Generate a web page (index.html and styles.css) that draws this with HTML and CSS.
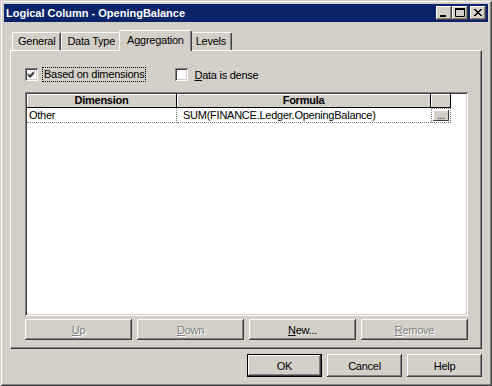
FILE: index.html
```html
<html lang="en">
<head>
    <meta charset="UTF-8">
    <title>Logical Column - OpeningBalance</title>
    <link rel="stylesheet" href="styles.css">
</head>
<body>
    <div class="window">
        <div class="titlebar">
            <span class="title">Logical Column - OpeningBalance</span>
            <div class="caption-btns">
                <span class="cap-btn">
                    <svg width="16" height="14" viewBox="0 0 16 14"><rect x="4" y="9" width="6" height="2" fill="#000"/></svg>
                </span>
                <span class="cap-btn">
                    <svg width="16" height="14" viewBox="0 0 16 14"><path d="M3.5 3.5h9v7h-9z" fill="none" stroke="#000"/><rect x="3" y="2" width="10" height="2" fill="#000"/></svg>
                </span>
                <span class="cap-btn close">
                    <svg width="16" height="14" viewBox="0 0 16 14"><path d="M4 3l7 7M5 3l7 7M11 3l-7 7M12 3l-7 7" stroke="#000" stroke-width="1"/></svg>
                </span>
            </div>
        </div>

        <div class="content">
            <div class="tabs">
                <span class="tab">General</span>
                <span class="tab">Data Type</span>
                <span class="tab active">Aggregation</span>
                <span class="tab">Levels</span>
            </div>

            <div class="panel">
                <div class="checks">
                    <label class="check">
                        <span class="box">
                            <svg width="9" height="9" viewBox="0 0 9 9"><path d="M1 3.5l2 2 4-4M1 4.5l2 2 4-4M1 5.5l2 2 4-4" stroke="#000" fill="none"/></svg>
                        </span>
                        <span class="focus">Based on dimensions</span>
                    </label>
                    <label class="check second">
                        <span class="box"></span>
                        <span class="cap"><u>D</u>ata is dense</span>
                    </label>
                </div>

                <div class="grid">
                    <div class="grid-head">
                        <span class="hcell col-dim">Dimension</span>
                        <span class="hcell col-formula">Formula</span>
                        <span class="hcell col-btn"></span>
                    </div>
                    <div class="grid-row">
                        <span class="cell col-dim">Other</span>
                        <span class="cell col-formula">SUM(FINANCE.Ledger.OpeningBalance)</span>
                        <span class="cell col-btn"><span class="dots">...</span></span>
                    </div>
                </div>

                <div class="grid-btns">
                    <button class="btn disabled"><u>U</u>p</button>
                    <button class="btn disabled"><u>D</u>own</button>
                    <button class="btn"><u>N</u>ew...</button>
                    <button class="btn disabled"><u>R</u>emove</button>
                </div>
            </div>

            <div class="dialog-btns">
                <button class="btn default">OK</button>
                <button class="btn">Cancel</button>
                <button class="btn">Help</button>
            </div>
        </div>
    </div>
</body>
</html>
```

FILE: styles.css
```css
* {
    box-sizing: border-box;
}

body {
    margin: 0;
    font-family: "Liberation Sans", Arial, sans-serif;
    font-size: 11px;
    letter-spacing: -0.25px;
    color: #000;
    background-color: #d4d0c8;
}

.window {
    width: 492px;
    height: 386px;
    padding: 4px;
    background-color: #d4d0c8;
    box-shadow: inset 1px 1px #d4d0c8, inset -1px -1px #404040, inset 2px 2px #fff, inset -2px -2px #808080;
    display: flex;
    flex-direction: column;
}

/* title bar */
.titlebar {
    height: 18px;
    background-color: #0a246a;
    display: flex;
    align-items: center;
    justify-content: space-between;
    padding: 0 2px;
}

.title {
    color: #fff;
    font-weight: bold;
    font-size: 11px;
    letter-spacing: 0;
}

.caption-btns {
    display: flex;
    align-items: center;
}

.cap-btn {
    width: 16px;
    height: 14px;
    background-color: #d4d0c8;
    box-shadow: inset -1px -1px #404040, inset 1px 1px #fff, inset -2px -2px #808080;
    display: block;
}

.cap-btn svg {
    display: block;
}

.cap-btn.close {
    margin-left: 2px;
}

/* tabs */
.content {
    padding: 8px 6px 0 6px;
}

.tabs {
    display: flex;
    height: 20px;
    padding-left: 2px;
    align-items: flex-end;
}

.tab {
    height: 18px;
    padding: 0 5px;
    line-height: 16px;
    border-top: 1px solid #fff;
    border-left: 1px solid #fff;
    border-right: 1px solid #404040;
    border-radius: 2px 2px 0 0;
    box-shadow: inset -1px 0 #808080;
}

.tab.active {
    height: 21px;
    margin: 0 -2px -1px -2px;
    padding: 0 7px;
    line-height: 18px;
    background-color: #d4d0c8;
    position: relative;
    z-index: 2;
}

/* panel */
.panel {
    height: 299px;
    padding: 17px 13px 7px 14px;
    border-top: 1px solid #fff;
    border-left: 1px solid #fff;
    border-right: 1px solid #404040;
    border-bottom: 1px solid #404040;
    box-shadow: inset -1px -1px #808080;
}

.checks {
    display: flex;
    height: 13px;
    align-items: center;
}

.check {
    display: flex;
    align-items: center;
}

.check.second {
    margin-left: 29px;
}

.box {
    width: 13px;
    height: 13px;
    background-color: #fff;
    box-shadow: inset 1px 1px #808080, inset -1px -1px #fff, inset 2px 2px #404040, inset -2px -2px #d4d0c8;
    display: flex;
    align-items: center;
    justify-content: center;
}

.box svg {
    display: block;
}

.focus {
    margin-left: 4px;
    padding: 0 1px;
    border: 1px dotted #000;
    line-height: 13px;
}

.cap {
    margin-left: 6px;
}

/* grid */
.grid {
    margin-top: 11px;
    height: 224px;
    padding: 2px;
    background-color: #fff;
    box-shadow: inset 1px 1px #808080, inset -1px -1px #fff, inset 2px 2px #404040, inset -2px -2px #d4d0c8;
}

.grid-head {
    display: flex;
    height: 14px;
}

.hcell {
    height: 14px;
    background-color: #d4d0c8;
    font-weight: bold;
    text-align: center;
    line-height: 13px;
    border-right: 1px solid #000;
    border-bottom: 1px solid #000;
    box-shadow: inset 1px 1px #fff;
}

.col-dim {
    width: 150px;
}

.col-formula {
    width: 254px;
}

.col-btn {
    width: 20px;
}

.grid-row {
    display: flex;
    height: 15px;
}

.cell {
    height: 15px;
    line-height: 14px;
    border-bottom: 1px dotted #808080;
    white-space: nowrap;
}

.cell.col-dim {
    padding-left: 2px;
    border-right: 1px dotted #808080;
}

.cell.col-formula {
    padding-left: 6px;
}

.cell.col-btn {
    border: 1px dotted #808080;
    padding: 1px;
}

.dots {
    display: block;
    height: 100%;
    background-color: #d4d0c8;
    box-shadow: inset -1px -1px #404040, inset 1px 1px #fff;
    text-align: center;
    line-height: 11px;
    font-size: 10px;
}

/* buttons */
.btn {
    font-family: "Liberation Sans", Arial, sans-serif;
    font-size: 11px;
    letter-spacing: -0.25px;
    color: #000;
    background-color: #d4d0c8;
    border: none;
    padding: 0;
    box-shadow: inset -1px -1px #404040, inset 1px 1px #fff, inset -2px -2px #808080;
}

.btn.disabled {
    color: #808080;
    text-shadow: 1px 1px #fff;
}

.grid-btns {
    display: flex;
    gap: 5px;
    margin-top: 3px;
    height: 21px;
}

.grid-btns .btn {
    flex: 1;
}

.dialog-btns {
    display: flex;
    justify-content: flex-end;
    gap: 5px;
    margin-top: 5px;
}

.dialog-btns .btn {
    width: 75px;
    height: 23px;
}

.btn.default {
    border: 1px solid #000;
    box-shadow: inset -1px -1px #404040, inset 1px 1px #fff, inset -2px -2px #808080;
}
```
